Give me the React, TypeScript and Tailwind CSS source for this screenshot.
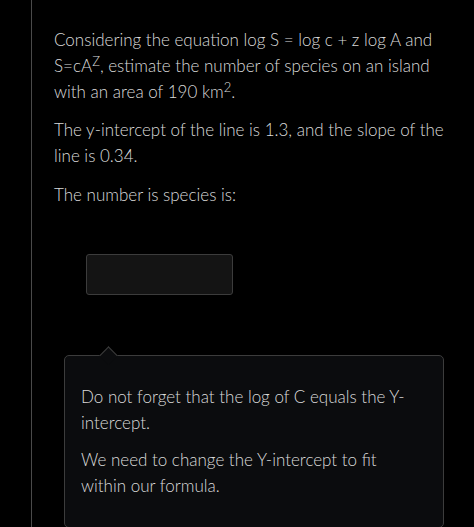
export default function App() {
  return (
    <div className="h-[527px] w-[474px] overflow-hidden bg-black font-['Lato','Noto_Sans',sans-serif] font-light text-[#dadada]">
      <div className="ml-[31px] h-full border-l border-[#4a4a4a] pl-[22px] pt-[27px]">
        <div className="w-[400px] text-[17px] leading-[26px]">
          <p>
            Considering the equation log S = log c + z log A and S=cA
            <sup className="text-[13px] leading-none">Z</sup>, estimate the number of species on an island with an area of 190 km
            <sup className="text-[13px] leading-none">2</sup>.
          </p>
          <p className="mt-[12px]">The y-intercept of the line is 1.3, and the slope of the line is 0.34.</p>
          <p className="mt-[13px]">The number is species is:</p>
        </div>
        <div className="ml-[32px] mt-[46px] h-[41px] w-[147px] rounded-[3px] border border-[#3c3c3c] bg-[#141414]" />
        <div className="relative ml-[10px] mt-[60px] h-[173px] w-[380px] rounded-[5px] border border-[#3c3c3c] bg-[#0b0c0e] pl-[16px] pr-[28px] pt-[28px] text-[17px] leading-[26px]">
          <div className="absolute -top-[7px] left-[37px] h-[13px] w-[13px] rotate-45 border-l border-t border-[#3c3c3c] bg-[#0b0c0e]" />
          <p>Do not forget that the log of C equals the Y-intercept.</p>
          <p className="mt-[11px]">We need to change the Y-intercept to fit within our formula.</p>
        </div>
      </div>
    </div>
  );
}
